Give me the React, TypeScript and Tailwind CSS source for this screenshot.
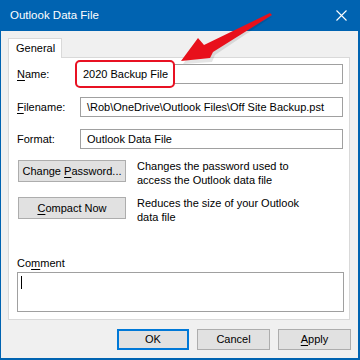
import React from "react";

const U = ({ children }: { children: React.ReactNode }) => (
  <span className="underline underline-offset-2">{children}</span>
);

export default function App() {
  return (
    <div
      className="relative w-[360px] h-[360px] flex flex-col border-l border-r-2 border-b-2 border-[#0063b1] bg-[#f0f0f0] text-[11px] text-black overflow-hidden"
      style={{ fontFamily: '"Liberation Sans", Arial, sans-serif' }}
    >
      {/* Title bar */}
      <div className="h-[31px] shrink-0 bg-[#0063b1] flex items-center justify-between pl-[9px] pr-[9px] text-white">
        <span className="text-[11.5px]">Outlook Data File</span>
        <svg width="11" height="11" viewBox="0 0 11 11" className="mr-[2px]">
          <path d="M0.5 0.5 L10.5 10.5 M10.5 0.5 L0.5 10.5" stroke="white" strokeWidth="1.1" />
        </svg>
      </div>

      {/* Body */}
      <div className="flex-1 flex flex-col pl-[7px] pr-[7px] pt-[7px] pb-[8px]">
        {/* Tabs */}
        <div className="flex">
          <div className="relative z-10 -mb-px h-[20px] w-[54px] bg-white border border-b-0 border-[#d9d9d9] flex items-center pl-[7px]">
            General
          </div>
        </div>
        {/* Panel */}
        <div className="w-[342px] h-[263px] bg-white border border-[#d9d9d9] flex flex-col pl-[8px] pr-[6px] pt-[6px] pb-[7px]">
          {/* Name */}
          <div className="flex items-center h-[20px]">
            <span className="w-[63px]">
              <U>N</U>ame:
            </span>
            <div className="relative w-[263px] h-[20px] border border-[#a0a0a0] flex items-center">
              <div className="absolute left-[-6px] top-[-5px] w-[100px] h-[28px] rounded-[5px] border-2 border-[#e81123] bg-white" />
              <span className="relative pl-[2px]">2020 Backup File</span>
            </div>
          </div>
          {/* Filename */}
          <div className="flex items-center h-[20px] mt-[13px]">
            <span className="w-[63px]">
              <U>F</U>ilename:
            </span>
            <div className="w-[263px] h-[20px] border border-[#a0a0a0] flex items-center pl-[6px] whitespace-nowrap">
              \Rob\OneDrive\Outlook Files\Off Site Backup.pst
            </div>
          </div>
          {/* Format */}
          <div className="flex items-center h-[20px] mt-[12px]">
            <span className="w-[63px]">Format:</span>
            <div className="w-[263px] h-[20px] border border-[#a0a0a0] flex items-center pl-[6px]">
              Outlook Data File
            </div>
          </div>
          {/* Change password */}
          <div className="flex items-start mt-[11px] ml-[1px]">
            <div className="w-[108px] h-[22px] shrink-0 bg-[#e1e1e1] border border-[#adadad] flex items-center justify-center">
              <span>
                Change <U>P</U>assword...
              </span>
            </div>
            <div className="ml-[11px] leading-[14px] -mt-[1px]">
              Changes the password used to
              <br />
              access the Outlook data file
            </div>
          </div>
          {/* Compact */}
          <div className="flex items-start mt-[10px] ml-[1px]">
            <div className="w-[108px] h-[22px] shrink-0 bg-[#e1e1e1] border border-[#adadad] flex items-center justify-center">
              <span>
                <U>C</U>ompact Now
              </span>
            </div>
            <div className="ml-[11px] leading-[14px] -mt-[1px]">
              Reduces the size of your Outlook
              <br />
              data file
            </div>
          </div>
          {/* Comment */}
          <div className="mt-auto flex flex-col">
            <span className="leading-[14px] mb-[2px]">
              Co<U>m</U>ment
            </span>
            <div className="w-[327px] h-[40px] border border-[#a0a0a0] pl-[3px] pt-[3px]">
              <div className="w-px h-[13px] bg-black" />
            </div>
          </div>
        </div>
        {/* Buttons */}
        <div className="mt-auto flex justify-end gap-[8px]">
          <div className="w-[72px] h-[21px] bg-[#e1e1e1] border-2 border-[#0078d7] flex items-center justify-center">
            OK
          </div>
          <div className="w-[73px] h-[21px] bg-[#e1e1e1] border border-[#adadad] flex items-center justify-center">
            Cancel
          </div>
          <div className="w-[73px] h-[21px] bg-[#e1e1e1] border border-[#adadad] flex items-center justify-center">
            <span>
              <U>A</U>pply
            </span>
          </div>
        </div>
      </div>

      {/* Arrow overlay */}
      <svg
        className="absolute left-0 top-0 pointer-events-none"
        width="360"
        height="360"
        viewBox="0 0 360 360"
      >
        <polygon
          points="182,64 199,41 205,48 272,16 214,55 211,62"
          fill="rgba(0,0,0,0.1)"
        />
        <polygon
          points="180,61 197,38 203,45 269,13 271,15 212,52 209,58"
          fill="#e8101b"
        />
      </svg>
    </div>
  );
}
